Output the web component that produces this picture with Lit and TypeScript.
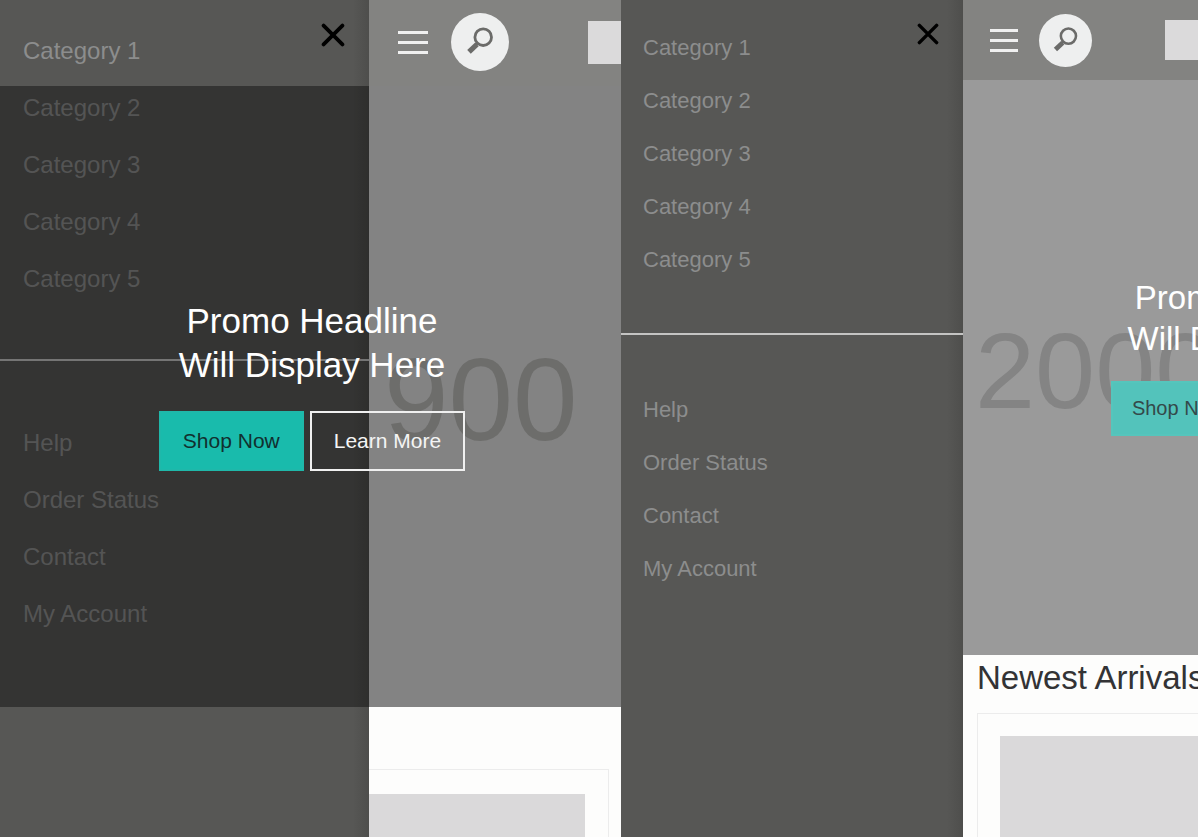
import { LitElement, html, css } from "lit";
import { customElement } from "lit/decorators.js";

const CATEGORIES = ["Category 1", "Category 2", "Category 3", "Category 4", "Category 5"];
const LINKS = ["Help", "Order Status", "Contact", "My Account"];

@customElement("app-root")
export class AppRoot extends LitElement {
  static styles = css`
    :host {
      display: grid;
      grid-template-columns: 621fr 577fr;
      min-height: 100vh;
      box-sizing: border-box;
      padding-right: 2px;
      background: #fff;
      overflow: hidden;
      font-family: "Liberation Sans", Arial, sans-serif;
    }
    .screen {
      position: relative;
      display: grid;
      min-width: 0;
      overflow: hidden;
    }
    .tablet {
      grid-template-columns: 369fr 252fr;
      --head: 86px;
      --hero: 621px;
      --row: 57px;
      --text: 24px;
      --top: 22px;
      --pad: 23px;
      --rule-gap: 52px;
      --icon: 58px;
      --burger: 30px;
      --gap: 23px;
      --box-gap: 79px;
      --box: 43px;
      --close: 24px;
      --title: 35px;
      --title-line: 44px;
      --promo-gap: 24px;
      --button: 21px;
      --button-pad: 22px;
      --button-height: 60px;
      --number: 116px;
    }
    .desktop {
      grid-template-columns: 342fr 235fr;
      --head: 80px;
      --hero: 575px;
      --row: 53px;
      --text: 22px;
      --top: 21px;
      --pad: 22px;
      --rule-gap: 47px;
      --icon: 53px;
      --burger: 28px;
      --gap: 21px;
      --box-gap: 73px;
      --box: 40px;
      --close: 22px;
      --title: 33px;
      --title-line: 41px;
      --promo-gap: 22px;
      --button: 20px;
      --button-pad: 19px;
      --button-height: 55px;
      --number: 108px;
    }
    .drawer {
      position: relative;
      padding-top: var(--top);
      background: linear-gradient(to left, #4e4e4c 0, #575755 16px);
    }
    .list {
      list-style: none;
      margin: 0;
      padding: 0 var(--pad);
    }
    .item {
      height: var(--row);
      line-height: var(--row);
    }
    .link {
      color: #8c8d8d;
      font-size: var(--text);
      text-decoration: none;
      white-space: nowrap;
    }
    .rule {
      height: 2px;
      margin: var(--rule-gap) 0 calc(var(--rule-gap) + 1px);
      border: 0;
      background: #c4c4c3;
    }
    .close {
      position: absolute;
      top: 23px;
      right: 24px;
      width: var(--close);
      height: var(--close);
      padding: 0;
      border: 0;
      background: none;
    }
    .svg {
      display: block;
      width: 100%;
      height: 100%;
    }
    .shade {
      position: absolute;
      top: var(--head);
      left: 0;
      width: 100%;
      height: var(--hero);
      background: rgba(0, 0, 0, 0.4);
      pointer-events: none;
    }
    .page {
      display: flex;
      flex-direction: column;
      min-width: 0;
      overflow: hidden;
      background: #fdfdfc;
    }
    .head {
      display: flex;
      align-items: center;
      flex: none;
      height: var(--head);
      padding-left: calc(var(--gap) + 6px);
      box-sizing: border-box;
      background: #838381;
    }
    .tablet .head {
      padding-bottom: 2px;
    }
    .burger {
      display: flex;
      flex-direction: column;
      gap: 7px;
      flex: none;
      width: var(--burger);
      padding: 0;
      border: 0;
      background: none;
    }
    .bar {
      display: block;
      width: 100%;
      height: 3px;
      background: #f0f0f0;
    }
    .search {
      flex: none;
      width: var(--icon);
      height: var(--icon);
      margin: 0 var(--box-gap) 0 var(--gap);
      padding: 0;
      border: 0;
      border-radius: 50%;
      background: #eeefef;
    }
    .box {
      flex: 1;
      height: var(--box);
      background: #dbdadb;
    }
    .hero {
      display: flex;
      align-items: center;
      flex: none;
      height: var(--hero);
      padding: 6px 0 0 15px;
      box-sizing: border-box;
      background: #838383;
      color: #6d6d6b;
    }
    .desktop .hero {
      padding-left: 12px;
      background: #9a9a9a;
      color: #848484;
    }
    .number {
      font-size: var(--number);
      line-height: 1;
    }
    .promo {
      position: absolute;
      top: var(--head);
      left: 0;
      width: 100%;
      height: var(--hero);
      display: flex;
      flex-direction: column;
      align-items: center;
      justify-content: center;
      gap: var(--promo-gap);
      padding: 0 0 var(--promo-gap) 3px;
      box-sizing: border-box;
    }
    .desktop .promo {
      left: 59.3%;
    }
    .title {
      margin: 0;
      color: #fff;
      font-size: var(--title);
      line-height: var(--title-line);
      font-weight: 400;
      text-align: center;
      white-space: nowrap;
    }
    .actions {
      display: flex;
      gap: 6px;
    }
    .button {
      height: var(--button-height);
      padding: 0 var(--button-pad);
      border: 2px solid #f0f0f0;
      background: none;
      color: #f4f4f4;
      font-family: inherit;
      font-size: var(--button);
      white-space: nowrap;
    }
    .primary {
      border-color: #1fb8aa;
      background: #19bbac;
      color: #11302f;
    }
    .desktop .primary {
      border-color: #55c5bc;
      background: #53c3bb;
      color: #34494a;
    }
    .section {
      display: flex;
      flex-direction: column;
      flex: 1;
      padding: 62px 12px 0 0;
    }
    .desktop .section {
      padding: 0 0 0 14px;
    }
    .arrivals {
      margin: 0 0 12px;
      color: #333335;
      font-size: 33px;
      line-height: 46px;
      font-weight: 400;
      white-space: nowrap;
    }
    .card {
      display: flex;
      flex: 1;
      padding: 24px 23px 0 0;
      border: solid #ececec;
      border-width: 1px 1px 0 0;
    }
    .desktop .card {
      padding: 22px 0 0 22px;
      border-width: 1px 0 0 1px;
    }
    .picture {
      flex: 1;
      background: #dad9da;
    }
  `;

  private renderList(labels: string[]) {
    return html`<ul class="list">
      ${labels.map(
        (label) => html`<li class="item"><a class="link" href="#">${label}</a></li>`
      )}
    </ul>`;
  }

  private renderScreen(kind: "tablet" | "desktop", size: string) {
    const shaded = kind === "tablet";
    return html`<section class="screen ${kind}">
      <nav class="drawer" aria-label="Menu">
        ${this.renderList(CATEGORIES)}
        <hr class="rule" />
        ${this.renderList(LINKS)}
        <button class="close" aria-label="Close menu">
          <svg class="svg" viewBox="0 0 24 24" fill="none" stroke="#000" stroke-width="3.8" stroke-linecap="round">
            <path d="M2.6 2.6 21.4 21.4M21.4 2.6 2.6 21.4" />
          </svg>
        </button>
        ${shaded ? html`<div class="shade"></div>` : ""}
      </nav>
      <div class="page">
        <header class="head">
          <button class="burger" aria-label="Open menu">
            <span class="bar"></span><span class="bar"></span><span class="bar"></span>
          </button>
          <button class="search" aria-label="Search">
            <svg class="svg" viewBox="0 0 58 58" fill="none" stroke="#6b6b69">
              <circle cx="32.2" cy="24.2" r="8.3" stroke-width="2.8" />
              <path d="M26.6 30 24.8 31.8" stroke-width="3" />
              <path d="M25.9 31.4 18 38.8" stroke-width="5.2" />
            </svg>
          </button>
          <div class="box"></div>
        </header>
        <div class="hero"><span class="number">${size}</span></div>
        <div class="section">
          ${shaded ? "" : html`<h2 class="arrivals">Newest Arrivals</h2>`}
          <div class="card"><div class="picture"></div></div>
        </div>
      </div>
      <div class="promo">
        <h1 class="title">Promo Headline<br />Will Display Here</h1>
        <div class="actions">
          <button class="button primary">Shop Now</button>
          <button class="button">Learn More</button>
        </div>
      </div>
    </section>`;
  }

  render() {
    return html`${this.renderScreen("tablet", "900")}${this.renderScreen("desktop", "2000")}`;
  }
}
